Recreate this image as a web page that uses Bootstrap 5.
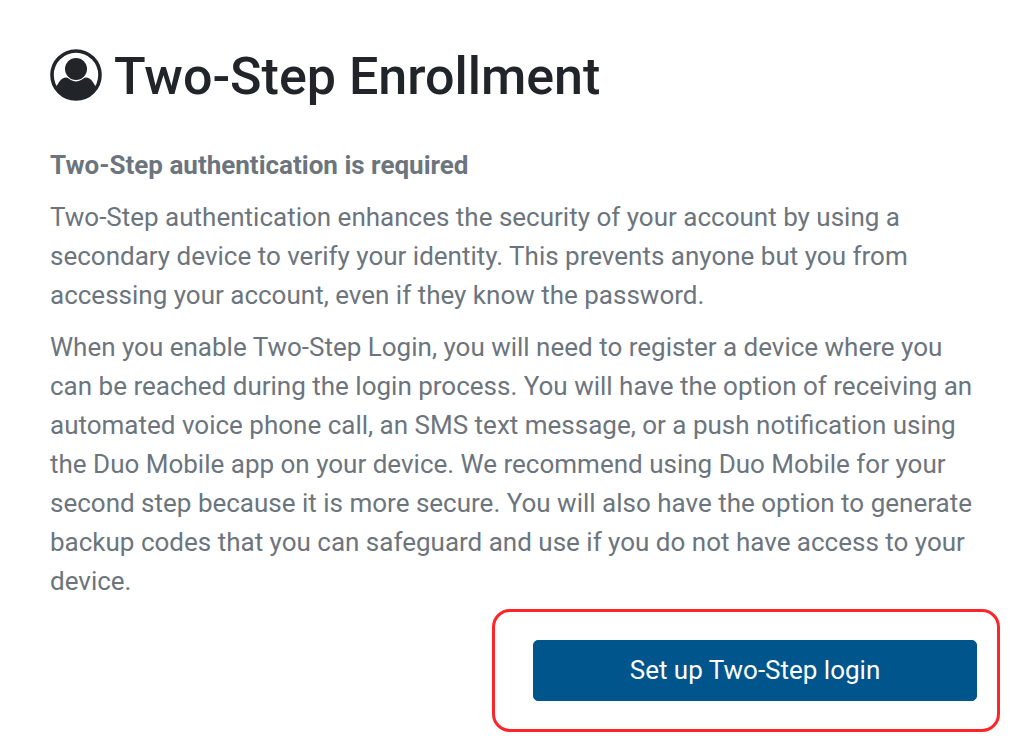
<!DOCTYPE html>
<html lang="en">
<head>
<meta charset="utf-8">
<meta name="viewport" content="width=device-width, initial-scale=1">
<title>Two-Step Enrollment</title>
<link href="https://cdn.jsdelivr.net/npm/bootstrap@5.3.0/dist/css/bootstrap.min.css" rel="stylesheet">
<style>
  body { font-family: Roboto, sans-serif; font-size: 26px; line-height: 39px; color: #6c757d; background: #fff; }
  .enroll { padding: 45px 24px 16px 50px; }
  .enroll-title { font-size: 52px; line-height: 64px; font-weight: 500; color: #212529; gap: 12px; margin-bottom: 37px; }
  .enroll-copy { padding-right: 23px; }
  .enroll-copy p { margin-bottom: 13px; }
  .enroll-copy p:last-child { margin-bottom: 8px; }
  .callout-ring { max-width: 508px; padding: 28px 20px 28px 38px; border: 3px solid #ff2427; border-radius: 18px; }
  .btn-setup { --bs-btn-color: #fff; --bs-btn-bg: #00558c; --bs-btn-border-color: #00558c; --bs-btn-hover-color: #fff; --bs-btn-hover-bg: #00436e; --bs-btn-font-size: 26px; --bs-btn-line-height: 39px; --bs-btn-padding-y: 10px; --bs-btn-border-radius: 5px; font-family: inherit; }
</style>
</head>
<body>
<main class="enroll">
  <h1 class="enroll-title d-flex align-items-center">
    <svg class="flex-shrink-0 mb-1" width="52" height="52" viewBox="0 0 52 52" fill="currentColor" aria-hidden="true">
      <circle cx="26" cy="26" r="24" fill="none" stroke="currentColor" stroke-width="3.600"/>
      <path d="M5 39C8 37 9 28.500 17 28.500C19.500 30 22 32.500 26 32.500S32.500 30 35 28.500C43 28.500 44 37 47 39C42 46 35 50.500 26 50.500S10 46 5 39Z"/>
      <circle cx="26" cy="20" r="11"/>
    </svg>
    Two-Step Enrollment
  </h1>
  <div class="enroll-copy">
    <p class="fw-bold">Two-Step authentication is required</p>
    <p>Two-Step authentication enhances the security of your account by using a secondary device to verify your identity. This prevents anyone but you from accessing your account, even if they know the password.</p>
    <p>When you enable Two-Step Login, you will need to register a device where you can be reached during the login process. You will have the option of receiving an automated voice phone call, an SMS text message, or a push notification using the Duo Mobile app on your device. We recommend using Duo Mobile for your second step because it is more secure. You will also have the option to generate backup codes that you can safeguard and use if you do not have access to your device.</p>
  </div>
  <div class="callout-ring ms-auto"><button type="button" class="btn btn-setup w-100">Set up Two-Step login</button></div>
</main>
<script src="https://cdn.jsdelivr.net/npm/bootstrap@5.3.0/dist/js/bootstrap.bundle.min.js"></script>
</body>
</html>
